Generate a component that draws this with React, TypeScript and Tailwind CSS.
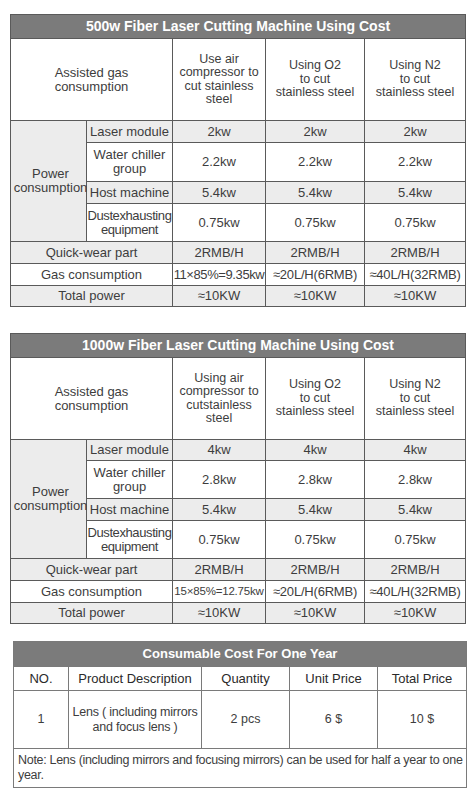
import React from 'react';

interface PowerRow {
    label: React.ReactNode
    value: string
    h: string
    gray: boolean
}

interface CostTableProps {
    title: string
    airHeader: React.ReactNode
    power: PowerRow[]
    gas: string
    gasClass: string
    headerH: string
}

const cell = "border border-[#5a5a5a] text-center align-middle p-0"

function CostTable({title, airHeader, power, gas, gasClass, headerH}: CostTableProps) {
    return (
        <table className="table-fixed border-collapse w-[455px] text-[13px] text-[#3d3d3d]">
            <colgroup>
                <col className="w-[76px]"/>
                <col className="w-[86px]"/>
                <col className="w-[93px]"/>
                <col className="w-[99px]"/>
                <col className="w-[101px]"/>
            </colgroup>
            <tbody>
            <tr>
                <td colSpan={5} className={cell + " h-[24px] bg-[#7b7b7b] text-white font-bold text-[14px]"}>
                    {title}
                </td>
            </tr>
            <tr>
                <td colSpan={2} className={cell + " bg-white leading-[14px] " + headerH}>
                    Assisted gas<br/>consumption
                </td>
                <td className={cell + " bg-white text-[12.5px] leading-[13.5px] whitespace-nowrap"}>{airHeader}</td>
                <td className={cell + " bg-white text-[12.5px] leading-[13.5px] whitespace-nowrap"}>Using O2<br/>to cut<br/>stainless steel</td>
                <td className={cell + " bg-white text-[12.5px] leading-[13.5px] whitespace-nowrap"}>Using N2<br/>to cut<br/>stainless steel</td>
            </tr>
            {power.map((row, i) => (
                <tr key={i}>
                    {i === 0 && (
                        <td rowSpan={4} className={cell + " bg-[#ececec] leading-[14px]"}>
                            <div className="whitespace-nowrap -mr-[4px]">Power<br/>consumption</div>
                        </td>
                    )}
                    <td className={cell + " leading-[14px] whitespace-nowrap " + row.h + (row.gray ? " bg-[#ececec]" : " bg-white")}>
                        {row.label}
                    </td>
                    {[0, 1, 2].map(k => (
                        <td key={k} className={cell + (row.gray ? " bg-[#ececec]" : " bg-white")}>{row.value}</td>
                    ))}
                </tr>
            ))}
            <tr>
                <td colSpan={2} className={cell + " h-[22px] bg-[#ececec]"}>Quick-wear part</td>
                <td className={cell + " bg-[#ececec]"}>2RMB/H</td>
                <td className={cell + " bg-[#ececec]"}>2RMB/H</td>
                <td className={cell + " bg-[#ececec]"}>2RMB/H</td>
            </tr>
            <tr>
                <td colSpan={2} className={cell + " h-[22px] bg-white"}>Gas consumption</td>
                <td className={cell + " bg-white whitespace-nowrap " + gasClass}>{gas}</td>
                <td className={cell + " bg-white whitespace-nowrap tracking-[-0.2px]"}>≈20L/H(6RMB)</td>
                <td className={cell + " bg-white whitespace-nowrap tracking-[-0.2px]"}>≈40L/H(32RMB)</td>
            </tr>
            <tr>
                <td colSpan={2} className={cell + " h-[21px] bg-[#ececec]"}>Total power</td>
                <td className={cell + " bg-[#ececec]"}>≈10KW</td>
                <td className={cell + " bg-[#ececec]"}>≈10KW</td>
                <td className={cell + " bg-[#ececec]"}>≈10KW</td>
            </tr>
            </tbody>
        </table>
    )
}

function powerRows(laser: string, chiller: string, tall: boolean): PowerRow[] {
    return [
        {label: 'Laser module', value: laser, h: tall ? 'h-[22px]' : 'h-[21px]', gray: true},
        {label: <>Water chiller<br/>group</>, value: chiller, h: tall ? 'h-[39px]' : 'h-[38px]', gray: false},
        {label: 'Host machine', value: '5.4kw', h: 'h-[22px]', gray: true},
        {label: <span className="tracking-[-0.4px]">Dustexhausting<br/>equipment</span>, value: '0.75kw', h: 'h-[38px]', gray: false},
    ]
}

const c3 = "border border-[#7a7a7a] text-center align-middle p-0"

function ConsumableTable() {
    return (
        <table className="table-fixed border-collapse w-[453px] text-[12.5px] text-[#3d3d3d]">
            <colgroup>
                <col className="w-[55px]"/>
                <col className="w-[133px]"/>
                <col className="w-[88px]"/>
                <col className="w-[88px]"/>
                <col className="w-[89px]"/>
            </colgroup>
            <tbody>
            <tr>
                <td colSpan={5} className={c3 + " h-[25px] bg-[#7b7b7b] text-white font-bold text-[13px]"}>
                    Consumable Cost For One Year
                </td>
            </tr>
            <tr className="text-[#2a2a2a] text-[13px]">
                <td className={c3 + " h-[24px]"}>NO.</td>
                <td className={c3}>Product Description</td>
                <td className={c3}>Quantity</td>
                <td className={c3}>Unit Price</td>
                <td className={c3}>Total Price</td>
            </tr>
            <tr>
                <td className={c3 + " h-[58px]"}>1</td>
                <td className={c3 + " leading-[15px] whitespace-nowrap tracking-[-0.2px]"}>Lens ( including mirrors<br/>and focus lens )</td>
                <td className={c3}>2 pcs</td>
                <td className={c3}>6 $</td>
                <td className={c3}>10 $</td>
            </tr>
            <tr>
                <td colSpan={5} className={c3 + " h-[39px] text-left px-[4px] leading-[15px] whitespace-nowrap tracking-[-0.3px]"}>
                    Note: Lens (including mirrors and focusing mirrors) can be used for half a year to one<br/>year.
                </td>
            </tr>
            </tbody>
        </table>
    )
}

export default function App() {
    return (
        <div className="w-[474px] h-[802px] bg-white font-['Liberation_Sans',Arial,sans-serif] overflow-hidden">
            <div className="pt-[14px] pl-[10px]">
                <CostTable
                    title="500w Fiber Laser Cutting Machine Using Cost"
                    airHeader={<>Use air<br/>compressor to<br/>cut stainless<br/>steel</>}
                    power={powerRows('2kw', '2.2kw', true)}
                    gas="11×85%=9.35kw"
                    gasClass="tracking-[-0.4px]"
                    headerH="h-[82px]"
                />
            </div>
            <div className="pt-[26px] pl-[10px]">
                <CostTable
                    title="1000w Fiber Laser Cutting Machine Using Cost"
                    airHeader={<>Using air<br/>compressor to<br/>cutstainless<br/>steel</>}
                    power={powerRows('4kw', '2.8kw', false)}
                    gas="15×85%=12.75kw"
                    gasClass="text-[11.5px] tracking-[-0.2px]"
                    headerH="h-[82px]"
                />
            </div>
            <div className="pt-[17px] pl-[13px]">
                <ConsumableTable/>
            </div>
        </div>
    )
}
